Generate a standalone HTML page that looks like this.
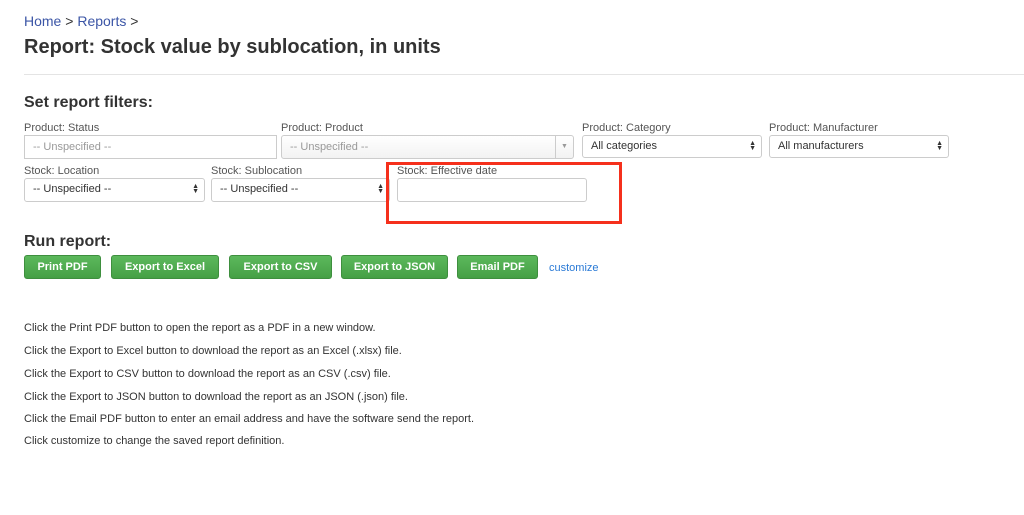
<!DOCTYPE html><html><head><style>
body{margin:0;width:1024px;height:515px;background:#fff;font-family:"Liberation Sans",sans-serif;color:#333;position:relative;overflow:hidden}
.a{position:absolute;white-space:nowrap}
.lbl{font-size:11px;color:#555}
.box{position:absolute;border:1px solid #ccc;border-radius:3px;background:#fff;box-sizing:border-box;font-size:11px;color:#333;padding-left:8px;line-height:21px}
.ph{color:#999}
.arr{position:absolute;right:5px;top:5px;font-size:7px;line-height:5px;color:#333}
.btn{position:absolute;top:255px;height:24px;background:linear-gradient(#5cb85c,#45a045);border:1px solid #3e8f3e;border-radius:3px;box-sizing:border-box;color:#fff;font-weight:bold;font-size:11px;line-height:22px;text-align:center}
.t{font-size:11px;color:#333}
</style></head><body>
<div class="a" style="left:24px;top:13px;font-size:14px;color:#333"><span style="color:#3b55a6">Home</span> &gt; <span style="color:#3b55a6">Reports</span> &gt;</div>
<div class="a" style="left:24px;top:36px;font-size:20px;font-weight:bold">Report: Stock value by sublocation, in units</div>
<div class="a" style="left:24px;top:74px;width:1000px;height:1px;background:#e4e4e4"></div>
<div class="a" style="left:24px;top:94px;font-size:16px;font-weight:bold">Set report filters:</div>
<div class="a lbl" style="left:24px;top:122px">Product: Status</div>
<div class="box ph" style="left:24px;top:135px;width:253px;height:24px;border-radius:0;line-height:22px">-- Unspecified --</div>
<div class="a lbl" style="left:281px;top:122px">Product: Product</div>
<div class="box ph" style="left:281px;top:135px;width:293px;height:24px;background:linear-gradient(#fff,#f2f2f2);line-height:22px">-- Unspecified --<div style="position:absolute;right:0;top:0;width:17px;height:22px;border-left:1px solid #ccc;color:#999;font-size:7px;text-align:center">▼</div></div>
<div class="a lbl" style="left:582px;top:122px">Product: Category</div>
<div class="box" style="left:582px;top:135px;width:180px;height:23px">All categories<div class="arr">▲<br>▼</div></div>
<div class="a lbl" style="left:769px;top:122px">Product: Manufacturer</div>
<div class="box" style="left:769px;top:135px;width:180px;height:23px">All manufacturers<div class="arr">▲<br>▼</div></div>
<div class="a lbl" style="left:24px;top:165px">Stock: Location</div>
<div class="box" style="left:24px;top:178px;width:181px;height:24px">-- Unspecified --<div class="arr">▲<br>▼</div></div>
<div class="a lbl" style="left:211px;top:165px">Stock: Sublocation</div>
<div class="box" style="left:211px;top:178px;width:179px;height:24px">-- Unspecified --<div class="arr">▲<br>▼</div></div>
<div class="a lbl" style="left:397px;top:165px">Stock: Effective date</div>
<div class="box" style="left:397px;top:178px;width:190px;height:24px"></div>
<div class="a" style="left:386px;top:162px;width:236px;height:62px;border:3px solid #f5301c;box-sizing:border-box"></div>
<div class="a" style="left:24px;top:233px;font-size:16px;font-weight:bold">Run report:</div>
<div class="btn" style="left:24px;width:77px">Print PDF</div>
<div class="btn" style="left:111px;width:108px">Export to Excel</div>
<div class="btn" style="left:229px;width:103px">Export to CSV</div>
<div class="btn" style="left:341px;width:107px">Export to JSON</div>
<div class="btn" style="left:457px;width:81px">Email PDF</div>
<div class="a" style="left:549px;top:262px;font-size:11px;color:#2a7ad6">customize</div>
<div class="a t" style="left:24px;top:322px">Click the Print PDF button to open the report as a PDF in a new window.</div>
<div class="a t" style="left:24px;top:345px">Click the Export to Excel button to download the report as an Excel (.xlsx) file.</div>
<div class="a t" style="left:24px;top:368px">Click the Export to CSV button to download the report as an CSV (.csv) file.</div>
<div class="a t" style="left:24px;top:391px">Click the Export to JSON button to download the report as an JSON (.json) file.</div>
<div class="a t" style="left:24px;top:413px">Click the Email PDF button to enter an email address and have the software send the report.</div>
<div class="a t" style="left:24px;top:435px">Click customize to change the saved report definition.</div>
</body></html>
